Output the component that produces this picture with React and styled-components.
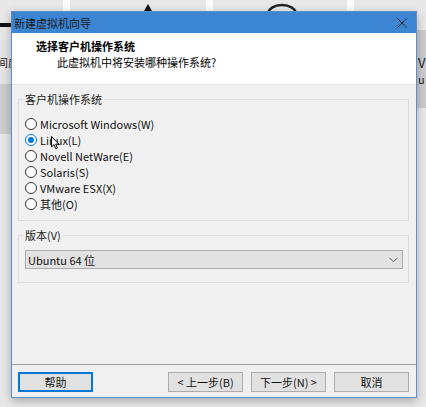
import React from "react";
import styled, { createGlobalStyle } from "styled-components";

const Global = createGlobalStyle`
  html, body { margin: 0; padding: 0; background: #e8e8e8; }
  * { box-sizing: border-box; }
  body { font-family: "Noto Sans CJK SC", "Noto Sans", sans-serif; font-size: 11px; color: #000; }
`;

const Desktop = styled.div`
  position: relative;
  width: 426px;
  height: 407px;
  overflow: hidden;
  background: #e8e8e8;
  padding: 11px 0 0 11px;
`;

const Stripe = styled.div`
  position: absolute;
  top: 0;
  height: 11px;
  width: 7px;
  background: #fbfbfb;
`;

const Shade = styled.div`
  position: absolute;
  background: ${(p) => p.$bg};
`;

const BgText = styled.div`
  position: absolute;
  font-size: 11px;
  line-height: 14px;
  color: #222;
  white-space: nowrap;
`;

const Window = styled.div`
  position: relative;
  z-index: 1;
  width: 406px;
  height: 387px;
  display: flex;
  flex-direction: column;
  border: 1px solid #5d8fcc;
  background: #f0f0f0;
  box-shadow: 0 3px 9px rgba(0, 0, 0, 0.28);
`;

const TitleBar = styled.div`
  height: 21px;
  background: #3c85d3;
  display: flex;
  align-items: center;
  justify-content: space-between;
  padding: 0 9px 0 2px;
  color: #1c1c1c;
  font-size: 11px;
`;

const Header = styled.div`
  height: 52px;
  background: #fff;
  border-bottom: 1px solid #e3e3e3;
  padding: 5px 0 0 24px;
  display: flex;
  flex-direction: column;
`;

const HeaderTitle = styled.div`
  font-weight: bold;
  line-height: 16px;
  font-size: 11px;
`;

const HeaderSub = styled.div`
  line-height: 16px;
  padding-left: 21px;
`;

const Body = styled.div`
  flex: 1;
  padding: 6px 7px 0 6px;
  display: flex;
  flex-direction: column;
`;

const Group = styled.fieldset`
  margin: ${(p) => (p.$first ? "0" : "6px")} 0 0 0;
  border: 1px solid #dcdcdc;
  padding: ${(p) => p.$pad};
  min-width: 0;
`;

const Legend = styled.legend`
  padding: 0 2px;
  margin-left: -2px;
  line-height: 16px;
  font-size: 11px;
  color: #1a1a1a;
`;

const RadioRow = styled.label`
  display: flex;
  align-items: center;
  height: 16px;
  gap: 3px;
  line-height: 16px;
  color: #111;
`;

const RadioCircle = styled.span`
  width: 12px;
  height: 12px;
  border-radius: 50%;
  border: 1px solid ${(p) => (p.$on ? "#0078d7" : "#333")};
  background: #fff;
  display: flex;
  align-items: center;
  justify-content: center;
  flex: none;
  &::after {
    content: "";
    width: 6px;
    height: 6px;
    border-radius: 50%;
    background: ${(p) => (p.$on ? "#0078d7" : "transparent")};
  }
`;

const Select = styled.div`
  height: 19px;
  border: 1px solid #acacac;
  background: #e2e2e2;
  display: flex;
  align-items: center;
  justify-content: space-between;
  padding: 0 4px 0 2px;
  color: #111;
`;

const Footer = styled.div`
  border-top: 1px solid #a0a0a0;
  padding: 7px 7px 5px 6px;
  display: flex;
  align-items: center;
  gap: 8px;
`;

const Button = styled.div`
  width: 75px;
  height: 20px;
  display: flex;
  align-items: center;
  justify-content: center;
  white-space: pre;
  background: #e1e1e1;
  border: 1px solid ${(p) => (p.$focus ? "#0078d7" : "#adadad")};
  box-shadow: ${(p) => (p.$focus ? "inset 0 0 0 1px #0078d7" : "none")};
  color: #111;
  font-size: 11px;
  margin-left: ${(p) => (p.$push ? "auto" : "0")};
`;

const Cursor = styled.svg`
  position: absolute;
  left: 51px;
  top: 136px;
  z-index: 2;
`;

const options = [
  "Microsoft Windows(W)",
  "Linux(L)",
  "Novell NetWare(E)",
  "Solaris(S)",
  "VMware ESX(X)",
  "其他(O)",
];

export default function App() {
  return (
    <>
      <Global />
      <Desktop>
        <Stripe style={{ left: 63 }} />
        <Stripe style={{ left: 206 }} />
        <Stripe style={{ left: 347 }} />
        <svg width="426" height="12" style={{ position: "absolute", left: 0, top: 0 }}>
          <polygon points="148,4 144,11 152,11" fill="#111" />
          <path d="M268 14 A14 9 0 0 1 296 14" stroke="#222" strokeWidth="2.5" fill="none" />
        </svg>
        <Shade $bg="#111" style={{ left: 0, top: 23, width: 11, height: 4 }} />
        <Shade $bg="#e4e4e4" style={{ left: 0, top: 40, width: 11, height: 44 }} />
        <Shade $bg="#cdcdcd" style={{ left: 0, top: 84, width: 11, height: 50 }} />
        <Shade $bg="#cbcbcb" style={{ left: 416, top: 30, width: 10, height: 78 }} />
        <BgText style={{ left: -3, top: 55 }}>间虚</BgText>
        <BgText style={{ left: 418, top: 56, fontSize: 13 }}>V</BgText>
        <BgText style={{ left: 418, top: 72 }}>u</BgText>
        <Cursor width="10" height="14" viewBox="0 0 10 14">
          <path d="M0.5 0.5 L0.5 11 L3 8.6 L4.8 12.8 L6.4 12.1 L4.7 8 L8 8 Z" fill="#fff" stroke="#000" strokeWidth="1" strokeLinejoin="round" />
        </Cursor>
        <Window>
          <TitleBar>
            <span>新建虚拟机向导</span>
            <svg width="10" height="10" viewBox="0 0 10 10">
              <path d="M0.5 0.5 L9.5 9.5 M9.5 0.5 L0.5 9.5" stroke="#1c1c1c" strokeWidth="1" />
            </svg>
          </TitleBar>
          <Header>
            <HeaderTitle>选择客户机操作系统</HeaderTitle>
            <HeaderSub>此虚拟机中将安装哪种操作系统?</HeaderSub>
          </Header>
          <Body>
            <Group $first $pad="9px 5px 8px 6px">
              <Legend>客户机操作系统</Legend>
              {options.map((o, i) => (
                <RadioRow key={o}>
                  <RadioCircle $on={i === 1} />
                  {o}
                </RadioRow>
              ))}
            </Group>
            <Group $pad="7px 5px 13px 6px">
              <Legend>版本(V)</Legend>
              <Select>
                <span>Ubuntu 64 位</span>
                <svg width="9" height="6" viewBox="0 0 9 6">
                  <path d="M0.5 0.8 L4.5 4.8 L8.5 0.8" stroke="#555" strokeWidth="1" fill="none" />
                </svg>
              </Select>
            </Group>
          </Body>
          <Footer>
            <Button $focus>帮助</Button>
            <Button $push>{"< 上一步(B)"}</Button>
            <Button>{"下一步(N) >"}</Button>
            <Button>取消</Button>
          </Footer>
        </Window>
      </Desktop>
    </>
  );
}
